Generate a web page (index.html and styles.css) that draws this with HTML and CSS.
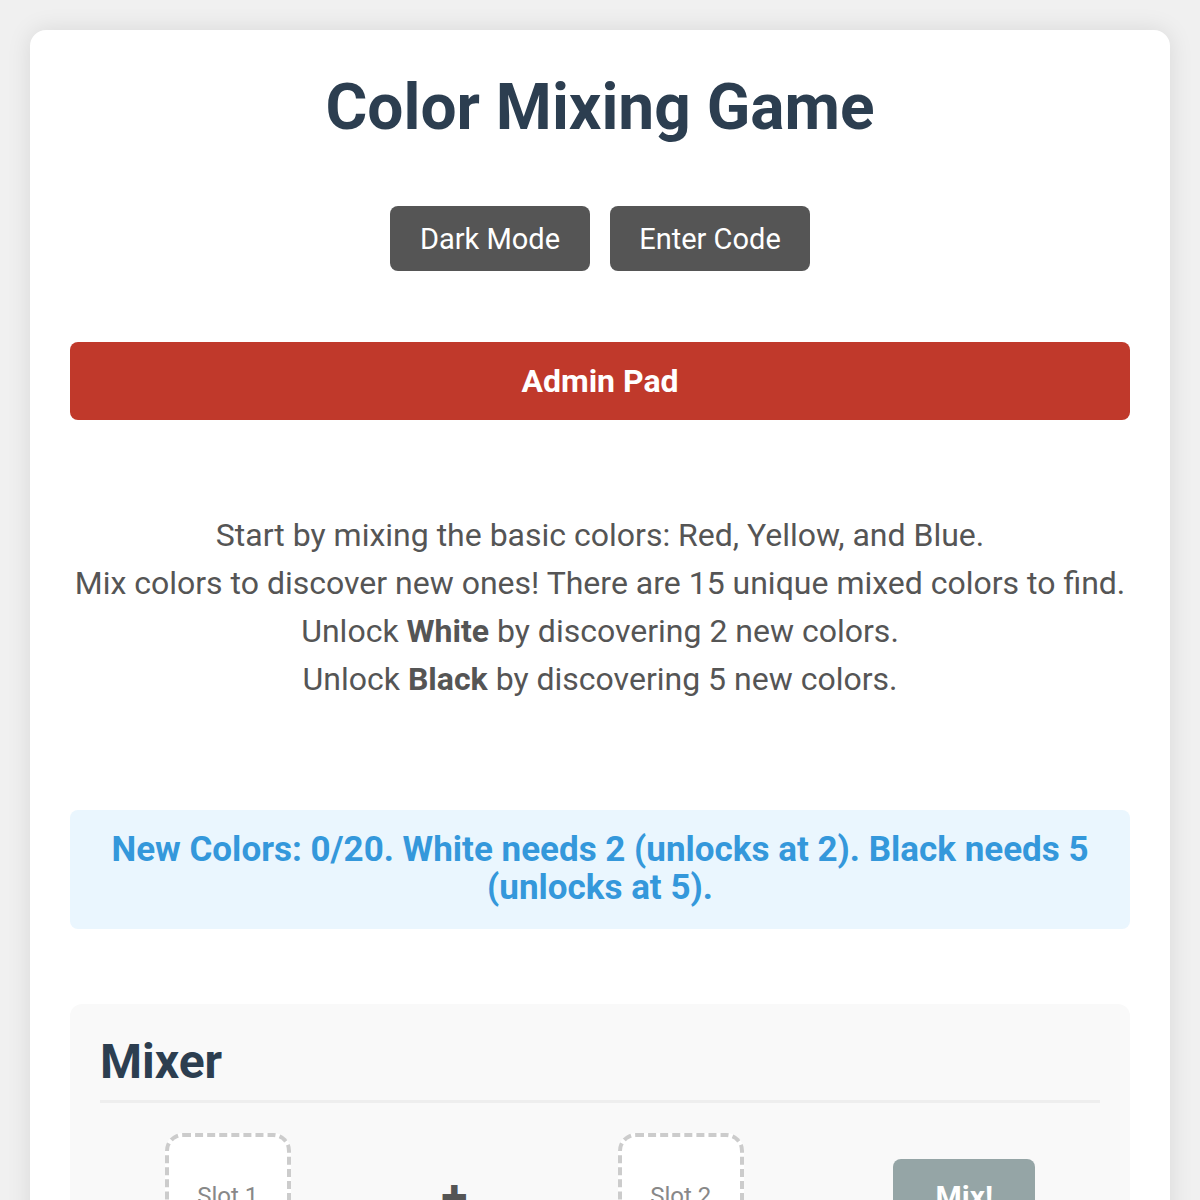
FILE: index.html
```html
<!DOCTYPE html>
<html lang="en">
<head>
  <meta charset="UTF-8">
  <meta name="viewport" content="width=device-width, initial-scale=1.0">
  <title>Color Mixing Game</title>
  <link rel="stylesheet" href="styles.css">
</head>
<body>
  <div class="container">
    <h1>Color Mixing Game</h1>

    <div class="top-buttons">
      <button class="btn-dark">Dark Mode</button>
      <button class="btn-dark">Enter Code</button>
    </div>

    <button class="admin-btn">Admin Pad</button>

    <div class="instructions">
      <p>Start by mixing the basic colors: Red, Yellow, and Blue.</p>
      <p>Mix colors to discover new ones! There are 15 unique mixed colors to find.</p>
      <p>Unlock <strong>White</strong> by discovering 2 new colors.</p>
      <p>Unlock <strong>Black</strong> by discovering 5 new colors.</p>
    </div>

    <div class="progress" id="progress">New Colors: 0/20. White needs 2 (unlocks at 2). Black needs 5 (unlocks at 5).</div>

    <div class="mixer">
      <h2>Mixer</h2>
      <div class="mixer-row">
        <div class="slot" id="slot1">Slot 1</div>
        <div class="plus">+</div>
        <div class="slot" id="slot2">Slot 2</div>
        <button class="mix-btn" disabled>Mix!</button>
      </div>
    </div>
  </div>
</body>
</html>
```

FILE: styles.css
```css
body {
  margin: 0;
  padding: 30px;
  background-color: #f0f0f0;
  font-family: Roboto, "Liberation Sans", Arial, sans-serif;
  color: #555;
}

.container {
  background-color: #fff;
  border-radius: 16px;
  box-shadow: 0 0 24px rgba(0, 0, 0, 0.1);
  padding: 40px 40px 60px;
  text-align: center;
}

h1 {
  margin: 0;
  font-size: 64px;
  line-height: 76px;
  color: #2c3e50;
  font-weight: bold;
}

.top-buttons {
  display: flex;
  justify-content: center;
  gap: 20px;
  margin-top: 60px;
}

.btn-dark {
  width: 200px;
  height: 65px;
  background-color: #555;
  color: #fff;
  border: none;
  border-radius: 8px;
  font-family: inherit;
  font-size: 29px;
  cursor: pointer;
}

.admin-btn {
  display: block;
  width: 100%;
  height: 78px;
  margin-top: 71px;
  background-color: #c0392b;
  color: #fff;
  border: none;
  border-radius: 8px;
  font-family: inherit;
  font-size: 32px;
  font-weight: bold;
  cursor: pointer;
}

.instructions {
  margin-top: 91px;
  font-size: 32px;
  line-height: 48px;
}

.instructions p {
  margin: 0;
}

.progress {
  margin-top: 107px;
  padding: 21px 20px 22px;
  background-color: #eaf6fe;
  border-radius: 8px;
  color: #3498db;
  font-size: 35px;
  font-weight: bold;
  line-height: 38px;
}

.mixer {
  margin-top: 75px;
  padding: 30px;
  background-color: #f9f9f9;
  border-radius: 12px;
}

.mixer h2 {
  margin: 0;
  padding-bottom: 10px;
  border-bottom: 3px solid #eee;
  text-align: left;
  font-size: 48px;
  line-height: 56px;
  color: #2c3e50;
}

.mixer-row {
  display: flex;
  justify-content: space-around;
  align-items: center;
  margin: 30px -10px 0;
}

.slot {
  width: 118px;
  height: 118px;
  border: 4px dashed #ccc;
  border-radius: 18px;
  background-color: #fff;
  display: flex;
  justify-content: center;
  align-items: center;
  font-size: 24px;
  color: #888;
}

.plus {
  width: 28px;
  font-size: 48px;
  font-weight: bold;
  color: #555;
}

.mix-btn {
  width: 142px;
  height: 74px;
  background-color: #95a5a6;
  color: #fff;
  border: none;
  border-radius: 8px;
  font-family: inherit;
  font-size: 30px;
  font-weight: bold;
}
```
